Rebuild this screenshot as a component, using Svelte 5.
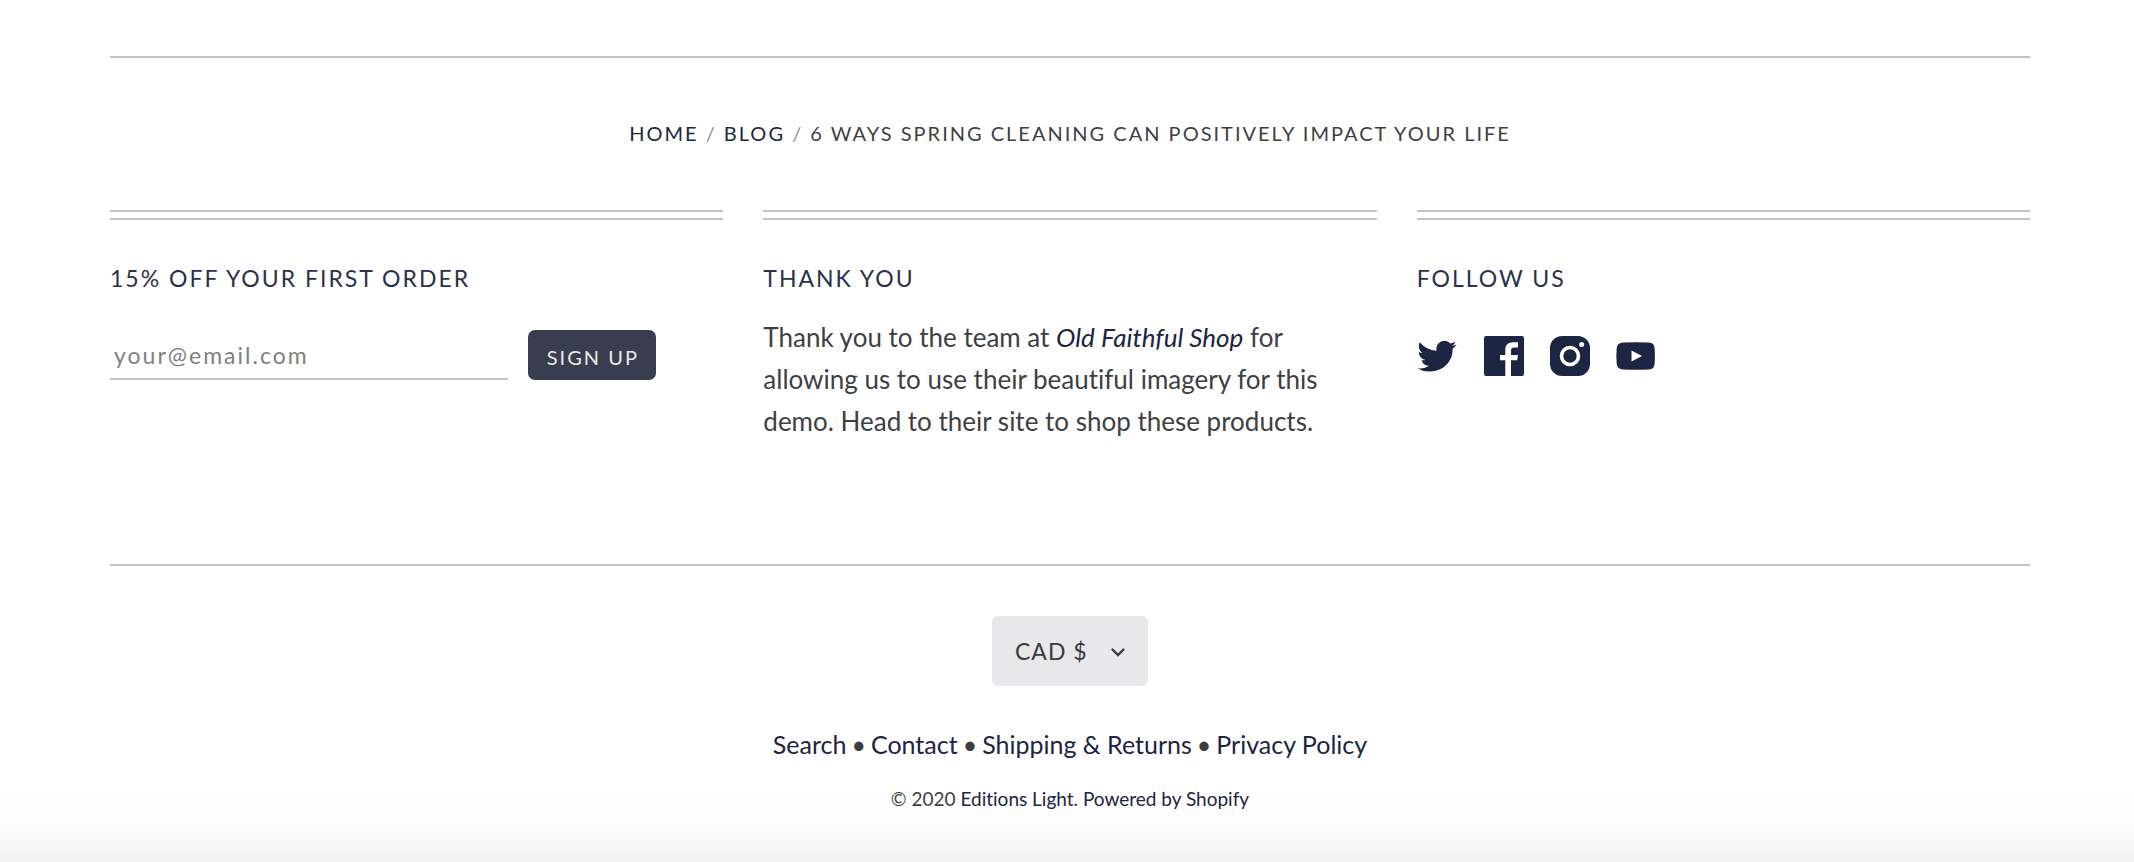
<script>
	let email = $state('')
	let currency = $state('CAD')

	const currencies = [
		{ code: 'CAD', label: 'CAD $' },
		{ code: 'USD', label: 'USD $' },
		{ code: 'EUR', label: 'EUR €' }
	]
	const crumbs = ['Home', 'Blog']
	const links = ['Search', 'Contact', 'Shipping & Returns', 'Privacy Policy']
	const socials = [
		{
			name: 'Twitter',
			path: 'M38.600 8.600a16 16 0 0 1-4.600 1.300 8 8 0 0 0 3.500-4.500 16 16 0 0 1-5.100 2A8.100 8.100 0 0 0 18.600 14.800a23 23 0 0 1-16.700-8.500 8.100 8.100 0 0 0 2.500 10.800 8 8 0 0 1-3.600-1v.1a8.100 8.100 0 0 0 6.500 7.900 8 8 0 0 1-3.700.1 8.100 8.100 0 0 0 7.600 5.600A16.200 16.200 0 0 1-.800 32.200 22.900 22.900 0 0 0 11.600 35.500c14.900 0 23-11 23-21.700v-1A16.400 16.400 0 0 0 38.600 8.600z'
		},
		{
			name: 'Facebook',
			path: 'M2 0h36a2 2 0 0 1 2 2v36a2 2 0 0 1-2 2H27V24.300h6.200l.800-5.300h-7v-4c0-2.500 1-3.500 3.300-3.500H34V6.300h-4.800C23.500 6.300 21.300 9.500 21.300 14v5H16v5.300h5.300V40H2a2 2 0 0 1-2-2V2a2 2 0 0 1 2-2z'
		},
		{
			name: 'Instagram',
			path: 'M12 0h16a12 12 0 0 1 12 12v16a12 12 0 0 1-12 12H12A12 12 0 0 1 0 28V12A12 12 0 0 1 12 0zM20 9.700a10.300 10.300 0 1 0 0 20.600 10.300 10.300 0 0 0 0-20.600zM20 13.300a6.700 6.700 0 1 1 0 13.400 6.700 6.700 0 0 1 0-13.400zM31.700 6a2.500 2.500 0 1 0 0 5 2.500 2.500 0 0 0 0-5z'
		},
		{
			name: 'YouTube',
			path: 'M7 6.600Q20 6 33 6.600Q38.200 7 38.600 12Q39.300 20 38.600 28Q38.200 33 33 33.500Q20 34.100 7 33.500Q1.400 33 .700 28Q0 20 .700 12Q1.400 7 7 6.600zM15.500 14.600v10.800L26 20z'
		}
	]
</script>

<footer>
	<nav class="breadcrumbs" aria-label="Breadcrumbs">
		{#each crumbs as crumb}
			<a href="#{crumb.toLowerCase()}">{crumb}</a> <span class="slash">/</span>{' '}
		{/each}
		<span>6 Ways Spring Cleaning Can Positively Impact Your Life</span>
	</nav>

	<div class="columns">
		<section>
			<h2>15% off your first order</h2>
			<form onsubmit={(e) => e.preventDefault()}>
				<input type="email" aria-label="Email" placeholder="your@email.com" bind:value={email} />
				<button>Sign up</button>
			</form>
		</section>
		<section>
			<h2>Thank you</h2>
			<p>
				Thank you to the team at <a class="shop" href="#shop">Old Faithful Shop</a> for allowing us to
				use their beautiful imagery for this demo. Head to their site to shop these products.
			</p>
		</section>
		<section>
			<h2>Follow us</h2>
			<ul class="social">
				{#each socials as social}
					<li>
						<a href="#{social.name.toLowerCase()}" aria-label={social.name}>
							<svg viewBox="0 0 40 40" width="40" height="40">
								<path d={social.path} fill="currentColor" fill-rule="evenodd" />
							</svg>
						</a>
					</li>
				{/each}
			</ul>
		</section>
	</div>

	<div class="bottom">
		<div class="currency">
			<select aria-label="Currency" bind:value={currency}>
				{#each currencies as c}
					<option value={c.code}>{c.label}</option>
				{/each}
			</select>
			<svg viewBox="0 0 14 9" width="14" height="9">
				<path d="M1.500 1.500 7 7l5.500-5.500" fill="none" stroke="currentColor" stroke-width="2.400" stroke-linecap="round" />
			</svg>
		</div>
		<ul class="links">
			{#each links as link}
				<li><a href="#{link.split(' ')[0].toLowerCase()}">{link}</a></li>
			{/each}
		</ul>
		<p class="copyright">
			© 2020 <a href="#home">Editions Light</a>. <a href="#shopify">Powered by Shopify</a>
		</p>
	</div>
</footer>

<style>
	:global(body) {
		margin: 0;
		background: #fff;
	}
	footer {
		box-sizing: border-box;
		min-height: 100vh;
		padding: 56px 104px 0 110px;
		font-family: Lato, 'Open Sans', sans-serif;
		font-size: 26px;
		font-variant-ligatures: none;
		line-height: 42px;
		color: #3e3f43;
		background: linear-gradient(to top, #f2f2f2, #fbfbfb 32px, #fff 72px);
	}
	a {
		color: #1c2541;
		text-decoration: none;
	}
	ul {
		display: flex;
		margin: 0;
		padding: 0;
		list-style: none;
	}
	svg {
		display: block;
		overflow: visible;
	}
	.breadcrumbs {
		padding: 60px 0 62px;
		border-top: 2px solid #c0c4c9;
		font-size: 20px;
		line-height: 30px;
		letter-spacing: 2px;
		text-align: center;
		text-transform: uppercase;
	}
	.slash {
		color: #8b8d92;
	}
	.columns {
		display: grid;
		grid-template-columns: repeat(3, 1fr);
		gap: 40px;
		padding-bottom: 122px;
		border-bottom: 2px solid #c0c4c9;
	}
	section::before {
		content: '';
		display: block;
		height: 6px;
		border: solid #c0c4c9;
		border-width: 2px 0;
	}
	h2 {
		margin: 42px 0 22px;
		color: #2a324b;
		font-size: 23px;
		font-weight: 400;
		line-height: 32px;
		letter-spacing: 2px;
		text-transform: uppercase;
	}
	p {
		margin: 0;
	}
	.shop {
		font-style: italic;
	}
	form {
		display: flex;
		gap: 20px;
		width: 89%;
		padding-top: 14px;
	}
	input {
		flex: 1;
		min-width: 0;
		height: 50px;
		box-sizing: border-box;
		padding: 2px 4px 0;
		border: 0;
		border-bottom: 2px solid #c0c4c9;
		background: none;
		color: inherit;
		font: inherit;
		font-size: 23px;
		letter-spacing: 2px;
	}
	input::placeholder {
		color: #808080;
	}
	button {
		width: 128px;
		height: 50px;
		padding: 3px 0 0 2px;
		border: 0;
		border-radius: 7px;
		background: #383e4f;
		color: #e8e9eb;
		font: inherit;
		font-size: 20px;
		line-height: 46px;
		letter-spacing: 2px;
		text-transform: uppercase;
	}
	.social {
		gap: 26px;
		padding: 20px 0 0 1px;
	}
	.bottom {
		display: flex;
		flex-direction: column;
		align-items: center;
		padding: 50px 0 40px;
	}
	.currency {
		position: relative;
		color: #3a3b3f;
	}
	select {
		appearance: none;
		display: block;
		width: 156px;
		height: 70px;
		padding: 0 46px 0 23px;
		border: 0;
		border-radius: 6px;
		background: #e8e8ea;
		color: inherit;
		font: inherit;
		font-size: 23px;
		letter-spacing: 1px;
	}
	.currency svg {
		position: absolute;
		top: 32px;
		right: 23px;
		pointer-events: none;
	}
	.links {
		padding-top: 37px;
		font-size: 25px;
	}
	.links li + li::before {
		content: '•';
		margin: 0 5px;
	}
	.copyright {
		padding-top: 19px;
		font-size: 19px;
		line-height: 30px;
	}
</style>
